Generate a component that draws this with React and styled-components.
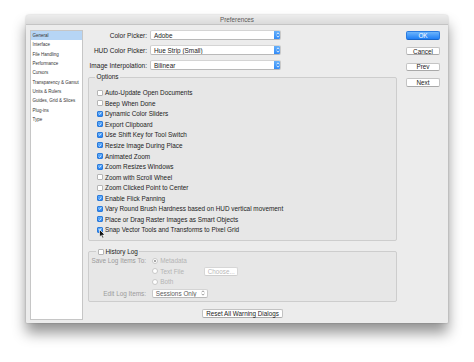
import React from "react";
import styled, { createGlobalStyle } from "styled-components";

const Global = createGlobalStyle`
  html, body { margin: 0; padding: 0; background: #fff; }
  body {
    width: 474px; height: 362px; overflow: hidden;
    font-family: "Liberation Sans", Arial, Helvetica, sans-serif;
    color: #222;
  }
  * { box-sizing: border-box; }
`;

const Page = styled.div`
  padding: 15px 0 0 26px;
`;

const Window = styled.div`
  width: 422px;
  height: 308px;
  background: #ececec;
  border-radius: 3px 3px 1px 1px;
  box-shadow: 0 10px 14px rgba(0, 0, 0, 0.42), 0 0 2px rgba(0, 0, 0, 0.25);
  display: flex;
  flex-direction: column;
`;

const TitleBar = styled.div`
  height: 10px;
  line-height: 9px;
  text-align: center;
  font-size: 6.3px;
  color: #5a5a5a;
  background: linear-gradient(#ececec, #dadada);
  border-bottom: 1px solid #c4c4c4;
  border-radius: 3px 3px 0 0;
`;

const Content = styled.div`
  display: flex;
  padding: 5px 8px 0 4px;
`;

const Sidebar = styled.div`
  width: 53px;
  height: 290px;
  background: #fff;
  border: 1px solid #c6c6c6;
  display: flex;
  flex-direction: column;
`;

const SideItem = styled.div`
  height: 9.35px;
  line-height: 9.35px;
  font-size: 4.5px;
  padding-left: 1.5px;
  color: #333;
  white-space: nowrap;
  background: ${(p) => (p.$active ? "#b6d5f5" : "transparent")};
`;

const Main = styled.div`
  width: 309px;
  margin-left: 5px;
  display: flex;
  flex-direction: column;
`;

const FormRow = styled.div`
  display: flex;
  align-items: center;
  height: 10px;
  gap: 3px;
  margin-bottom: ${(p) => (p.$last ? 0 : 5)}px;
`;

const FormLabel = styled.div`
  width: 59px;
  text-align: right;
  font-size: 6.5px;
  color: #222;
  white-space: nowrap;
`;

const SelectBox = styled.div`
  width: ${(p) => p.$w}px;
  height: ${(p) => p.$h || 10}px;
  display: flex;
  align-items: center;
  background: #fff;
  border: 1px solid #c9c9c9;
  border-top-color: #d4d4d4;
  border-bottom-color: #b9b9b9;
  border-radius: 2px;
  padding-left: 3px;
  font-size: 6.4px;
  color: ${(p) => p.$color || "#222"};
  overflow: hidden;
`;

const SelectText = styled.span`
  flex: 1;
  white-space: nowrap;
`;

const Stepper = styled.span`
  width: 7px;
  align-self: stretch;
  margin: -1px -1px -1px 0;
  background: linear-gradient(#6ab4fb, #2c86f6);
  border-radius: 0 2px 2px 0;
  display: flex;
  align-items: center;
  justify-content: center;
`;

const GrayStepper = styled.span`
  width: 8px;
  display: flex;
  align-items: center;
  justify-content: center;
`;

const Arrows = ({ color }) => (
  <svg width="4" height="6" viewBox="0 0 4 6">
    <path d="M0.6 2.3 L2 0.8 L3.4 2.3 M0.6 3.7 L2 5.2 L3.4 3.7" fill="none" stroke={color} strokeWidth="0.8" />
  </svg>
);

const Group = styled.fieldset`
  margin: ${(p) => p.$mt}px 0 0 0;
  padding: ${(p) => p.$pad};
  border: 1px solid #cdcdcd;
  border-radius: 2px;
  background: rgba(0, 0, 0, 0.018);
  min-width: 0;
  width: 309px;
`;

const Legend = styled.legend`
  height: 8px;
  line-height: 8px;
  padding: 0 1.5px;
  margin-left: ${(p) => p.$ml}px;
  font-size: 6.4px;
  color: #222;
  display: flex;
  align-items: center;
  gap: 2px;
`;

const CheckRow = styled.div`
  position: relative;
  height: 10.57px;
  display: flex;
  align-items: center;
  gap: 2px;
  font-size: 6.4px;
  color: #222;
  white-space: nowrap;
`;

const Box = styled.span`
  width: 6px;
  height: 6px;
  flex: none;
  border-radius: 1px;
  display: flex;
  align-items: center;
  justify-content: center;
  background: ${(p) => (p.$checked ? "linear-gradient(#62affa, #2a84f3)" : "#fff")};
  border: 0.7px solid ${(p) => (p.$checked ? "#2b7ad9" : "#b5b5b5")};
`;

const Checkbox = ({ checked }) => (
  <Box $checked={checked}>
    {checked && (
      <svg width="5" height="5" viewBox="0 0 5 5">
        <path d="M1 2.6 L2.1 3.8 L4 1.1" fill="none" stroke="#fff" strokeWidth="0.9" />
      </svg>
    )}
  </Box>
);

const Cursor = styled.svg`
  position: absolute;
  left: 2px;
  top: 4px;
`;

const HistGrid = styled.div`
  display: grid;
  grid-template-columns: 54px auto;
  column-gap: 5.7px;
  grid-auto-rows: 10.5px;
  font-size: 6.4px;
`;

const HistLabel = styled.div`
  text-align: right;
  white-space: nowrap;
  color: #9b9b9b;
  display: flex;
  align-items: center;
  justify-content: flex-end;
  margin-top: ${(p) => p.$mt || 0}px;
`;

const HistCell = styled.div`
  display: flex;
  align-items: center;
  gap: 2.5px;
  white-space: nowrap;
  color: #b4b4b4;
  margin-top: ${(p) => p.$mt || 0}px;
`;

const Radio = styled.span`
  width: 6px;
  height: 6px;
  flex: none;
  border-radius: 50%;
  background: #fff;
  border: 0.7px solid #c8c8c8;
  display: flex;
  align-items: center;
  justify-content: center;
  &::after {
    content: "";
    display: ${(p) => (p.$on ? "block" : "none")};
    width: 2px;
    height: 2px;
    border-radius: 50%;
    background: #8c8c8c;
  }
`;

const SmallButton = styled.div`
  margin-left: ${(p) => p.$ml || 0}px;
  width: ${(p) => p.$w}px;
  height: ${(p) => p.$h}px;
  display: flex;
  align-items: center;
  justify-content: center;
  font-size: 6.3px;
  white-space: nowrap;
  background: #fff;
  border: 0.8px solid ${(p) => (p.$disabled ? "#d6d6d6" : "#c2c2c2")};
  border-bottom-color: ${(p) => (p.$disabled ? "#cfcfcf" : "#aaaaaa")};
  border-radius: 2px;
  color: ${(p) => (p.$disabled ? "#b8b8b8" : "#222")};
`;

const ResetRow = styled.div`
  display: flex;
  justify-content: center;
  margin-top: 7px;
`;

const ButtonCol = styled.div`
  width: 34px;
  margin-left: 9px;
  padding-top: 1px;
  display: flex;
  flex-direction: column;
  gap: 7.3px;
`;

const DialogButton = styled.div`
  height: 8.5px;
  display: flex;
  align-items: center;
  justify-content: center;
  font-size: 6.4px;
  border-radius: 2px;
  background: ${(p) => (p.$primary ? "linear-gradient(#6db5fb, #1f7ff6)" : "#fff")};
  color: ${(p) => (p.$primary ? "#fff" : "#222")};
  border: 0.8px solid ${(p) => (p.$primary ? "#2a7be0" : "#c4c4c4")};
  border-bottom-color: ${(p) => (p.$primary ? "#1a66c8" : "#a9a9a9")};
`;

const sideItems = [
  "General",
  "Interface",
  "File Handling",
  "Performance",
  "Cursors",
  "Transparency & Gamut",
  "Units & Rulers",
  "Guides, Grid & Slices",
  "Plug-ins",
  "Type",
];

const options = [
  ["Auto-Update Open Documents", false],
  ["Beep When Done", false],
  ["Dynamic Color Sliders", true],
  ["Export Clipboard", true],
  ["Use Shift Key for Tool Switch", true],
  ["Resize Image During Place", true],
  ["Animated Zoom", true],
  ["Zoom Resizes Windows", true],
  ["Zoom with Scroll Wheel", false],
  ["Zoom Clicked Point to Center", false],
  ["Enable Flick Panning", true],
  ["Vary Round Brush Hardness based on HUD vertical movement", true],
  ["Place or Drag Raster Images as Smart Objects", true],
  ["Snap Vector Tools and Transforms to Pixel Grid", true],
];

const selects = [
  ["Color Picker:", "Adobe"],
  ["HUD Color Picker:", "Hue Strip (Small)"],
  ["Image Interpolation:", "Bilinear"],
];

export default function App() {
  return (
    <>
      <Global />
      <Page>
        <Window>
          <TitleBar>Preferences</TitleBar>
          <Content>
            <Sidebar>
              {sideItems.map((s, i) => (
                <SideItem key={s} $active={i === 0}>
                  {s}
                </SideItem>
              ))}
            </Sidebar>
            <Main>
              {selects.map(([label, value], i) => (
                <FormRow key={label} $last={i === selects.length - 1}>
                  <FormLabel>{label}</FormLabel>
                  <SelectBox $w={131}>
                    <SelectText>{value}</SelectText>
                    <Stepper>
                      <Arrows color="#fff" />
                    </Stepper>
                  </SelectBox>
                </FormRow>
              ))}

              <Group $mt={3} $pad="6.4px 8px 5px 8px">
                <Legend $ml={-2}>Options</Legend>
                {options.map(([text, checked], i) => (
                  <CheckRow key={text}>
                    <Checkbox checked={checked} />
                    {text}
                    {i === options.length - 1 && (
                      <Cursor width="7" height="10" viewBox="0 0 7 10">
                        <path
                          d="M0.5 0.5 L0.5 8 L2.3 6.4 L3.6 9.3 L4.8 8.8 L3.6 6 L6 6 Z"
                          fill="#111"
                          stroke="#fff"
                          strokeWidth="0.7"
                          strokeLinejoin="round"
                        />
                      </Cursor>
                    )}
                  </CheckRow>
                ))}
              </Group>

              <Group $mt={6.3} $pad="0 8px 3px 3px">
                <Legend $ml={4}>
                  <Checkbox checked={false} />
                  History Log
                </Legend>
                <HistGrid>
                  <HistLabel>Save Log Items To:</HistLabel>
                  <HistCell>
                    <Radio $on />
                    Metadata
                  </HistCell>
                  <div />
                  <HistCell>
                    <Radio />
                    Text File
                    <SmallButton $disabled $w={33.5} $h={8.7} $ml={18}>
                      Choose...
                    </SmallButton>
                  </HistCell>
                  <div />
                  <HistCell>
                    <Radio />
                    Both
                  </HistCell>
                  <HistLabel $mt={2}>Edit Log Items:</HistLabel>
                  <HistCell $mt={2}>
                    <SelectBox $w={56.6} $h={9.3} $color="#5a5a5a">
                      <SelectText>Sessions Only</SelectText>
                      <GrayStepper>
                        <Arrows color="#888" />
                      </GrayStepper>
                    </SelectBox>
                  </HistCell>
                </HistGrid>
              </Group>

              <ResetRow>
                <SmallButton $w={80.7} $h={9.3}>
                  Reset All Warning Dialogs
                </SmallButton>
              </ResetRow>
            </Main>
            <ButtonCol>
              <DialogButton $primary>OK</DialogButton>
              <DialogButton>Cancel</DialogButton>
              <DialogButton>Prev</DialogButton>
              <DialogButton>Next</DialogButton>
            </ButtonCol>
          </Content>
        </Window>
      </Page>
    </>
  );
}
